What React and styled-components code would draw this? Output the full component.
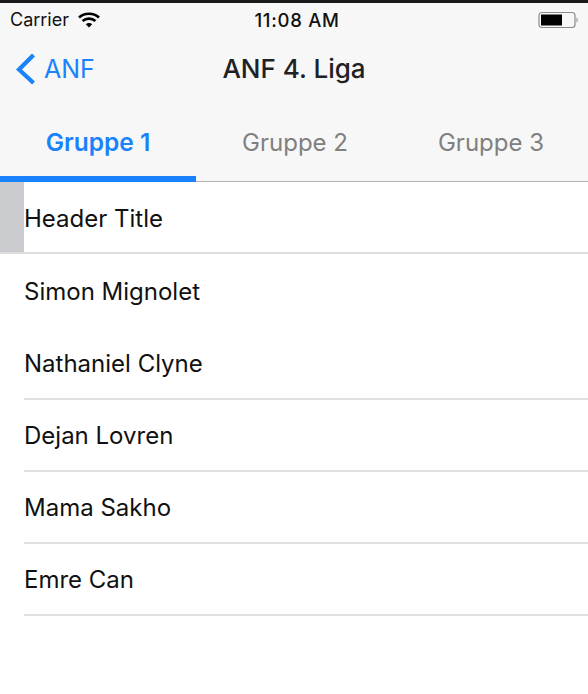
import React from "react";
import styled, { createGlobalStyle } from "styled-components";

const GlobalStyle = createGlobalStyle`
  html, body {
    margin: 0;
    padding: 0;
    background: #ffffff;
    font-family: Inter, "Liberation Sans", sans-serif;
  }
`;

const Page = styled.div`
  width: 588px;
  height: 694px;
  overflow: hidden;
  background: #ffffff;
  border-top: 3px solid #1a1a1a;
  box-sizing: border-box;
`;

const Bars = styled.div`
  background: #f7f7f7;
`;

const StatusBar = styled.div`
  height: 33px;
  padding: 0 8px 0 10px;
  display: grid;
  grid-template-columns: 1fr auto 1fr;
  align-items: center;
  font-size: 18px;
  color: #111111;
`;

const Carrier = styled.div`
  display: flex;
  align-items: center;
  gap: 9px;
`;

const Clock = styled.div`
  font-weight: 500;
  font-size: 18.5px;
  letter-spacing: 0.7px;
  margin-left: 4px;
`;

const BatteryWrap = styled.div`
  display: flex;
  justify-content: flex-end;
`;

const NavBar = styled.div`
  height: 66px;
  padding: 0 15px 2px;
  box-sizing: border-box;
  display: grid;
  grid-template-columns: 1fr auto 1fr;
  align-items: center;
`;

const BackLink = styled.div`
  display: flex;
  align-items: center;
  gap: 8px;
  padding-top: 1px;
  color: #1a82fb;
  font-size: 25px;
`;

const Title = styled.div`
  font-size: 26px;
  font-weight: 500;
  color: #202124;
`;

const Tabs = styled.div`
  display: grid;
  grid-template-columns: repeat(3, 196px);
  height: 79px;
  border-bottom: 1px solid #b2b2b2;
`;

const Tab = styled.div`
  display: flex;
  align-items: center;
  justify-content: center;
  padding-top: 6px;
  padding-left: ${(p) => (p.$active ? 0 : 2)}px;
  font-size: ${(p) => (p.$active ? 24.5 : 24)}px;
  font-weight: ${(p) => (p.$active ? 600 : 400)};
  color: ${(p) => (p.$active ? "#1a82fb" : "#808080")};
  border-bottom: 6px solid ${(p) => (p.$active ? "#1a82fb" : "transparent")};
  margin-bottom: -1px;
`;

const HeaderRow = styled.div`
  height: 72px;
  padding: 3px 0 0 24px;
  box-sizing: border-box;
  display: flex;
  align-items: center;
  font-size: 24px;
  color: #111111;
  border-bottom: 2px solid #dcdcdc;
  margin-bottom: 2px;
  background: linear-gradient(90deg, #cbccd0 24px, #ffffff 24px);
`;

const Row = styled.div`
  height: 72px;
  margin-left: 24px;
  box-sizing: border-box;
  display: flex;
  align-items: center;
  font-size: 24px;
  color: #111111;
  border-bottom: 2px solid ${(p) => (p.$plain ? "transparent" : "#e0e0e0")};
`;

const players = [
  { name: "Simon Mignolet", plain: true },
  { name: "Nathaniel Clyne" },
  { name: "Dejan Lovren" },
  { name: "Mama Sakho" },
  { name: "Emre Can" },
];

const Wifi = () => (
  <svg width="22" height="16" viewBox="0 0 22 16">
    <path d="M1 5.500C6.500 .5 15.500 .5 21 5.500" fill="none" stroke="#000" strokeWidth="2.6" />
    <path d="M4.600 9C8.200 5.800 13.800 5.800 17.400 9" fill="none" stroke="#000" strokeWidth="2.6" />
    <path d="M7.800 12.200C9.600 10.600 12.400 10.600 14.200 12.200L11 15.600Z" fill="#000" />
  </svg>
);

const Battery = () => (
  <svg width="42" height="18" viewBox="0 0 42 18">
    <rect x="1" y="1.500" width="36" height="15" rx="3" fill="none" stroke="#8a8a8a" strokeWidth="1.2" />
    <rect x="3" y="3.500" width="21" height="11" fill="#000" />
    <path d="M38.500 6.500C40 7 40 11 38.500 11.500Z" fill="#8a8a8a" />
  </svg>
);

const Chevron = () => (
  <svg width="21" height="34" viewBox="0 0 21 34">
    <path d="M18.500 3L4 17.500L18.500 31" fill="none" stroke="#1a82fb" strokeWidth="4.200" />
  </svg>
);

export default function App() {
  return (
    <Page>
      <GlobalStyle />
      <Bars>
        <StatusBar>
          <Carrier>
            Carrier
            <Wifi />
          </Carrier>
          <Clock>11:08 AM</Clock>
          <BatteryWrap>
            <Battery />
          </BatteryWrap>
        </StatusBar>
        <NavBar>
          <BackLink>
            <Chevron />
            ANF
          </BackLink>
          <Title>ANF 4. Liga</Title>
          <div />
        </NavBar>
        <Tabs>
          <Tab $active>Gruppe 1</Tab>
          <Tab>Gruppe 2</Tab>
          <Tab>Gruppe 3</Tab>
        </Tabs>
      </Bars>
      <HeaderRow>Header Title</HeaderRow>
      {players.map((p) => (
        <Row key={p.name} $plain={p.plain}>
          {p.name}
        </Row>
      ))}
    </Page>
  );
}
